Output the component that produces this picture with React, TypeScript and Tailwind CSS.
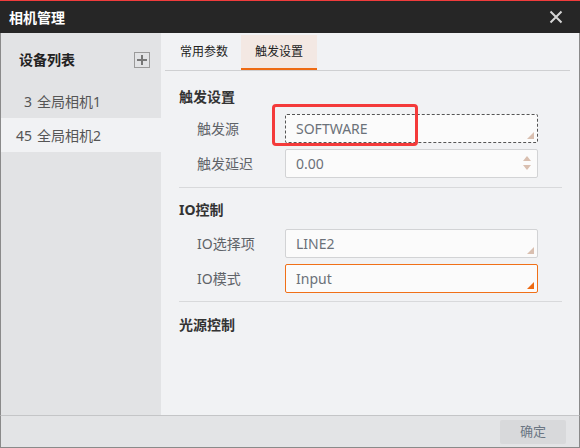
import { useState } from 'react';

const font = { fontFamily: '"Noto Sans", "Noto Sans CJK SC", sans-serif' };

function Corner({ active }: { active?: boolean }) {
  return (
    <svg width="7" height="7" viewBox="0 0 7 7" className="absolute right-[3px] bottom-[3px]">
      <polygon points="7,0 7,7 0,7" fill={active ? '#ee6a12' : '#d9bfb0'} />
    </svg>
  );
}

function Field({
  label,
  value,
  kind,
  first,
}: {
  label: string;
  value: string;
  kind?: 'focus' | 'spin' | 'active';
  first?: boolean;
}) {
  const border =
    kind === 'focus'
      ? 'border border-dashed border-[#555]'
      : kind === 'active'
      ? 'border border-[#f07018]'
      : 'border border-[#d2d3d5]';
  return (
    <div className={`flex items-center h-[29px] ${first ? 'mt-0' : 'mt-[6px]'}`}>
      <div className="w-[106px] pl-[18px] text-[14px] text-[#5f6368]">{label}</div>
      <div className={`relative w-[253px] h-full rounded-[2px] bg-[#fbfbfb] flex items-center pl-[10px] text-[14px] text-[#6b7179] ${border}`}>
        {value}
        {kind === 'spin' ? (
          <svg width="8" height="14" viewBox="0 0 8 14" className="absolute right-[6px] top-[6px]">
            <polygon points="4,0 8,5 0,5" fill="#d9bfb0" />
            <polygon points="0,9 8,9 4,14" fill="#d9bfb0" />
          </svg>
        ) : (
          <Corner active={kind === 'active'} />
        )}
      </div>
    </div>
  );
}

export default function App() {
  const [tab, setTab] = useState(1);
  const [sel, setSel] = useState(1);

  return (
    <div style={font} className="w-[580px] h-[448px] flex flex-col bg-[#262626] overflow-hidden">
      <div className="h-[33px] border-t border-[#f03c3c] flex items-center justify-between pl-[9px] pr-[17px]">
        <span className="text-white font-bold text-[14px]">相机管理</span>
        <svg width="14" height="14" viewBox="0 0 14 14">
          <path d="M1.5 1.5 L12.5 12.5 M12.5 1.5 L1.5 12.5" stroke="#d6d6d6" strokeWidth="2" />
        </svg>
      </div>

      <div className="flex-1 flex border-l border-r border-[#8a8a8a] min-h-0">
        <div className="w-[160px] bg-[#e2e3e5] flex flex-col">
          <div className="h-[51px] flex items-center justify-between pl-[18px] pr-[11px] pt-[2px]">
            <span className="font-bold text-[14px] text-[#222]">设备列表</span>
            <div className="w-[16px] h-[16px] border border-[#9a9a9a] flex items-center justify-center">
              <svg width="10" height="10" viewBox="0 0 10 10">
                <path d="M5 0 V10 M0 5 H10" stroke="#777" strokeWidth="2" />
              </svg>
            </div>
          </div>
          {[
            { id: '3', name: '全局相机1' },
            { id: '45', name: '全局相机2' },
          ].map((c, i) => (
            <div
              key={c.id}
              onClick={() => setSel(i)}
              className={`h-[34px] flex items-center text-[14px] text-[#555] ${sel === i ? 'bg-[#f1f2f4]' : ''}`}
            >
              <span className="w-[35px] text-right pr-[4px] inline-block">{c.id}</span>
              <span className="ml-[1px]">{c.name}</span>
            </div>
          ))}
        </div>

        <div className="flex-1 bg-[#f1f2f4] flex flex-col pt-[2px]">
          <div className="ml-[4px] mr-[9px] flex border-b border-[#cfd0d2] h-[36px]">
            {['常用参数', '触发设置'].map((t, i) => (
              <div
                key={t}
                onClick={() => setTab(i)}
                className={`flex items-center text-[12px] text-[#222] border-b-2 ${
                  i === 0 ? 'pl-[15px] pr-[13px]' : 'px-[14px]'
                } ${tab === i ? 'bg-[#f3e8e3] border-[#ee6a12]' : 'border-transparent'}`}
              >
                {t}
              </div>
            ))}
          </div>

          <div className="pl-[18px] pr-[17px]">
            <div className="h-[50px] pt-[15px] font-bold text-[14px] text-[#333]">触发设置</div>
            <div className="relative flex flex-col -mt-[7px]">
              <Field label="触发源" value="SOFTWARE" kind="focus" first />
              <Field label="触发延迟" value="0.00" kind="spin" />
              <div className="absolute left-[93px] top-[-10px] w-[146px] h-[42px] border-[3px] border-[#f43a3a] rounded-[4px]" />
            </div>
            <div className="h-px bg-[#d8d9db] mt-[9px]" />
            <div className="h-[41px] pt-[11px] font-bold text-[14px] text-[#333]">IO控制</div>
            <Field label="IO选择项" value="LINE2" first />
            <Field label="IO模式" value="Input" kind="active" />
            <div className="h-px bg-[#d8d9db] mt-[8px]" />
            <div className="pt-[12px] font-bold text-[14px] text-[#333]">光源控制</div>
          </div>
        </div>
      </div>

      <div className="h-[33px] bg-[#e3e4e6] border-t border-[#c4c5c7] border-l border-r border-b border-l-[#8a8a8a] border-r-[#8a8a8a] border-b-[#8a8a8a] flex items-center justify-end pr-[13px]">
        <button className="w-[66px] h-[24px] rounded-[2px] bg-[#d8d9db] text-[13px] text-[#6b7683]">确定</button>
      </div>
    </div>
  );
}
